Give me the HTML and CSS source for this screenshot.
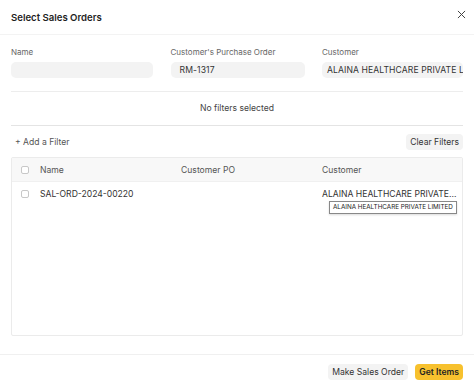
FILE: index.html
```html
<!DOCTYPE html>
<html>
<head>
<meta charset="utf-8">
<link rel="stylesheet" href="styles.css">
</head>
<body>
<div class="modal">
  <div class="header">
    <div class="title">Select Sales Orders</div>
    <svg class="close" width="9" height="9" viewBox="0 0 9 9"><path d="M1.2 1.2L7.8 7.8M7.8 1.2L1.2 7.8" stroke="#444" stroke-width="1" fill="none" stroke-linecap="round"/></svg>
  </div>
  <div class="body">
    <div class="fields">
      <div class="field">
        <div class="label">Name</div>
        <div class="input"></div>
      </div>
      <div class="field">
        <div class="label">Customer's Purchase Order</div>
        <div class="input po">RM-1317</div>
      </div>
      <div class="field">
        <div class="label">Customer</div>
        <div class="input cust">ALAINA HEALTHCARE PRIVATE LIMITED</div>
      </div>
    </div>
    <div class="nofilters">No filters selected</div>
    <div class="filterbar">
      <span class="add">+ Add a Filter</span>
      <span class="btn clear">Clear Filters</span>
    </div>
    <div class="table">
      <div class="row head">
        <span class="cb"></span>
        <span class="c1">Name</span>
        <span class="c2">Customer PO</span>
        <span class="c3">Customer</span>
      </div>
      <div class="row item">
        <span class="cb"></span>
        <span class="c1">SAL-ORD-2024-00220</span>
        <span class="c2"></span>
        <span class="c3">ALAINA HEALTHCARE PRIVATE...</span>
        <span class="tip">ALAINA HEALTHCARE PRIVATE LIMITED</span>
      </div>
    </div>
  </div>
  <div class="footer">
    <span class="btn">Make Sales Order</span>
    <span class="btn primary">Get Items</span>
  </div>
</div>
</body>
</html>
```
FILE: styles.css
```css
* { box-sizing: border-box; }
html, body { margin: 0; padding: 0; background: #fff; }
body {
  font-family: Inter, "Noto Sans", sans-serif;
  color: #333;
  font-size: 8.6px;
  width: 474px;
  height: 389px;
  overflow: hidden;
}
.modal { display: flex; flex-direction: column; height: 389px; }
.header {
  height: 35px;
  display: flex;
  align-items: center;
  justify-content: space-between;
  padding: 1px 8px 0 11px;
  border-bottom: 1px solid #f3f3f3;
}
.title { font-size: 9.6px; font-weight: 600; color: #1f1f1f; }
.close { margin-top: -6px; }
.body { padding: 0 11px; flex: 1; }
.fields {
  display: grid;
  grid-template-columns: 142px 134px 141px;
  column-gap: 17.5px;
  padding-top: 12px;
  padding-bottom: 13px;
  border-bottom: 1px solid #ededed;
}
.label { color: #666; font-size: 8px; height: 10px; line-height: 10px; margin-bottom: 5px; }
.input {
  height: 16px;
  background: #f3f3f3;
  border-radius: 5px;
  padding: 0 5px;
  line-height: 16px;
  font-size: 8.6px;
  color: #333;
  white-space: nowrap;
  overflow: hidden;
  letter-spacing: 0.1px;
}
.input.po { padding-left: 9px; }
.input.cust { padding: 0 4px 0 5px; }
.nofilters {
  height: 34px;
  line-height: 33px;
  text-align: center;
  border-bottom: 1px solid #e4e4e4;
  color: #444;
}
.filterbar {
  height: 31px;
  display: flex;
  align-items: center;
  justify-content: space-between;
  padding-left: 4px;
}
.add { color: #555; }
.btn {
  display: inline-block;
  height: 16px;
  line-height: 16px;
  padding: 0 4px;
  border-radius: 4px;
  background: #f3f3f3;
  color: #333;
}
.table {
  height: 179px;
  border: 1px solid #ebebeb;
  border-radius: 2px;
}
.row { display: flex; align-items: center; position: relative; }
.head { height: 24px; background: #f8f8f8; border-bottom: 1px solid #f0f0f0; color: #555; }
.item { height: 24px; color: #333; }
.cb {
  width: 8px; height: 8px;
  border: 1px solid #c8c8c8;
  border-radius: 2px;
  margin-left: 9px;
  margin-right: 11px;
  background: #fff;
}
.c1 { width: 141px; }
.c2 { width: 141px; }
.c3 { flex: 1; }
.tip {
  position: absolute;
  left: 317px;
  top: 19px;
  font-size: 6.3px;
  background: #fff;
  border: 1px solid #888;
  padding: 1px 3px;
  line-height: 9px;
  color: #222;
  box-shadow: 0 1px 2px rgba(0,0,0,0.15);
}
.footer {
  height: 35px;
  border-top: 1px solid #f0f0f0;
  display: flex;
  align-items: center;
  justify-content: flex-end;
  gap: 7px;
  padding: 0 11px 1px 0;
}
.primary { background: #f7c12e; color: #222; font-weight: 600; }
```
